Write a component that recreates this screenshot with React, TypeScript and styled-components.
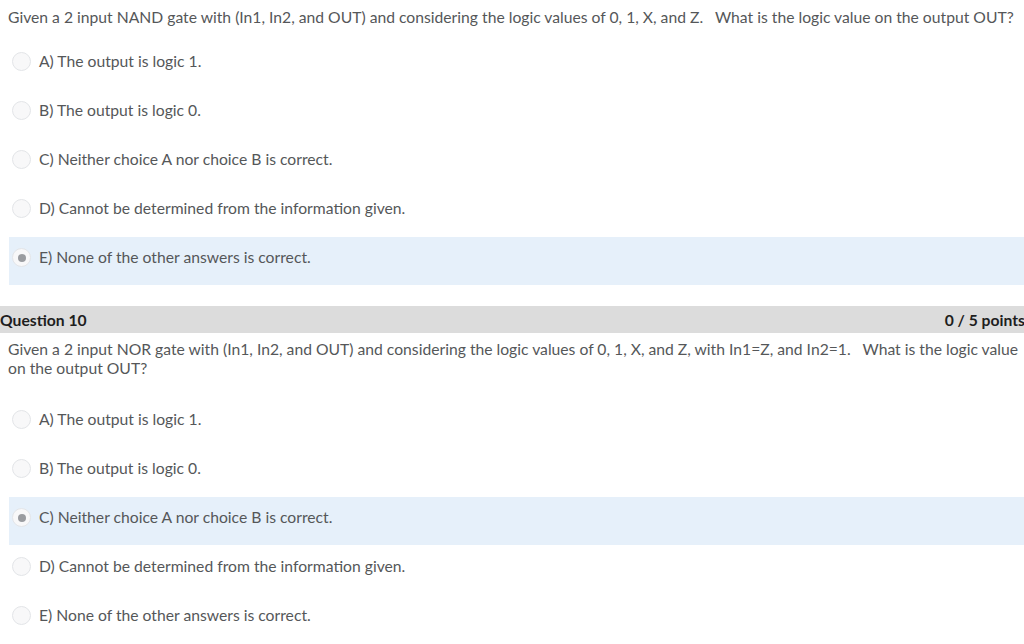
import styled, { createGlobalStyle } from "styled-components";

const GlobalStyle = createGlobalStyle`
  html, body {
    margin: 0;
    padding: 0;
    background: #ffffff;
    overflow: hidden;
  }
  body {
    font-family: Lato, "Open Sans", sans-serif;
  }
`;

type Question = {
  number?: number;
  points?: string;
  text: string;
  options: string[];
  selected: number;
};

const questions: Question[] = [
  {
    text: "Given a 2 input NAND gate with (In1, In2, and OUT) and considering the logic values of 0, 1, X, and Z.\u00a0\u00a0 What is the logic value on the output OUT?",
    options: [
      "A) The output is logic 1.",
      "B) The output is logic 0.",
      "C) Neither choice A nor choice B is correct.",
      "D) Cannot be determined from the information given.",
      "E) None of the other answers is correct.",
    ],
    selected: 4,
  },
  {
    number: 10,
    points: "0 / 5 points",
    text: "Given a 2 input NOR gate with (In1, In2, and OUT) and considering the logic values of 0, 1, X, and Z, with In1=Z, and In2=1.\u00a0\u00a0 What is the logic value on the output OUT?",
    options: [
      "A) The output is logic 1.",
      "B) The output is logic 0.",
      "C) Neither choice A nor choice B is correct.",
      "D) Cannot be determined from the information given.",
      "E) None of the other answers is correct.",
    ],
    selected: 2,
  },
];

const App = () => {
  return (
    <Page>
      <GlobalStyle />
      {questions.map((q, qi) => (
        <Block key={qi}>
          {q.number && (
            <Header>
              <span>Question {q.number}</span>
              <span>{q.points}</span>
            </Header>
          )}
          <Prompt $first={!q.number}>{q.text}</Prompt>
          <Options>
            {q.options.map((opt, oi) => (
              <Option key={oi} $active={oi === q.selected}>
                <Radio $checked={oi === q.selected} />
                <OptionText>{opt}</OptionText>
              </Option>
            ))}
          </Options>
        </Block>
      ))}
    </Page>
  );
};

export default App;

const Page = styled.div`
  width: 1032px;
  display: flex;
  flex-direction: column;
  gap: 21px;
  padding-top: 8px;
`;

const Block = styled.div`
  display: flex;
  flex-direction: column;
`;

const Header = styled.div`
  height: 27px;
  background: #dcdcdc;
  display: flex;
  align-items: center;
  justify-content: space-between;
  padding: 0 7px 0 0;
  font-size: 15.7px;
  font-weight: 700;
  color: #1e1e1e;
`;

const Prompt = styled.div<{ $first: boolean }>`
  padding: ${(p) => (p.$first ? "0" : "7px")} 4px 0 8px;
  font-size: 15.7px;
  line-height: 19px;
  color: #555759;
  margin-bottom: ${(p) => (p.$first ? "14px" : "21px")};
`;

const Options = styled.div`
  display: flex;
  flex-direction: column;
  gap: 1px;
  margin-left: 9px;
`;

const Option = styled.div<{ $active: boolean }>`
  height: 48px;
  display: flex;
  align-items: flex-start;
  padding-top: 10px;
  box-sizing: border-box;
  background: ${(p) => (p.$active ? "#e6f0fa" : "transparent")};
`;

const Radio = styled.span<{ $checked: boolean }>`
  width: 17px;
  height: 17px;
  margin: 1px 8px 0 3px;
  border-radius: 50%;
  border: 1px solid #e3e5e8;
  background: #f8f8f9;
  display: flex;
  align-items: center;
  justify-content: center;
  flex-shrink: 0;

  &::after {
    content: "";
    width: 8px;
    height: 8px;
    border-radius: 50%;
    background: ${(p) => (p.$checked ? "#9a9ca0" : "transparent")};
  }
`;

const OptionText = styled.span`
  font-size: 15.7px;
  line-height: 20px;
  color: #555759;
`;
